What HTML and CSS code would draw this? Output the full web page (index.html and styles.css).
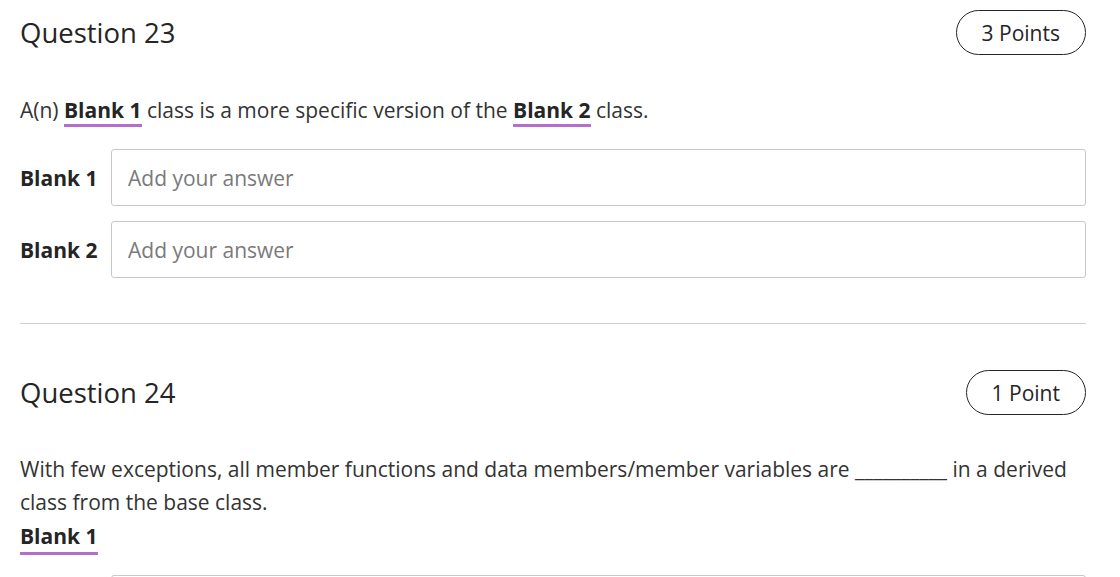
FILE: index.html
```html
<!DOCTYPE html>
<html lang="en">
<head>
<meta charset="UTF-8">
<title>Quiz</title>
<link rel="stylesheet" href="styles.css">
</head>
<body>
<div class="quiz">
  <div class="question">
    <div class="q-head">
      <h2>Question 23</h2>
      <span class="points">3 Points</span>
    </div>
    <p class="q-text">A(n) <span class="blank">Blank 1</span> class is a more specific version of the <span class="blank">Blank 2</span> class.</p>
    <div class="answer-row">
      <label>Blank 1</label>
      <input type="text" placeholder="Add your answer">
    </div>
    <div class="answer-row">
      <label>Blank 2</label>
      <input type="text" placeholder="Add your answer">
    </div>
  </div>

  <div class="question">
    <div class="q-head">
      <h2>Question 24</h2>
      <span class="points">1 Point</span>
    </div>
    <p class="q-text">With few exceptions, all member functions and data members/member variables are __________ in a derived class from the base class.</p>
    <div class="blank-title"><span class="blank">Blank 1</span></div>
    <div class="answer-row">
      <label></label>
      <input type="text" placeholder="Add your answer">
    </div>
  </div>
</div>
</body>
</html>
```

FILE: styles.css
```css
body {
  margin: 0;
  font-family: "Open Sans", Arial, sans-serif;
  color: #252525;
  background: #fff;
}
.quiz {
  padding: 0 34px 0 20px;
}
.question {
  border-bottom: 1px solid #cfcfcf;
  padding-bottom: 45px;
}
.question + .question {
  border-bottom: none;
}
.q-head {
  display: flex;
  justify-content: space-between;
  align-items: center;
  padding-top: 10px;
  height: 45px;
}
h2 {
  margin: 0;
  font-size: 27.5px;
  font-weight: 400;
  color: #252525;
}
.question + .question .q-head {
  padding-top: 46px;
}
.points {
  display: inline-flex;
  align-items: center;
  height: 43px;
  padding: 0 25px;
  border: 1px solid #252525;
  border-radius: 23px;
  font-size: 21px;
}
.q-text {
  margin: 39px 0 0;
  font-size: 21px;
  line-height: 33px;
  color: #333;
}
.question + .question .q-text {
  margin-top: 38px;
}
.blank {
  font-weight: 700;
  color: #252525;
  border-bottom: 3px solid #b46fce;
  padding-bottom: 0;
}
.answer-row {
  display: flex;
  align-items: center;
  margin-top: 15px;
}
.q-text + .answer-row {
  margin-top: 22px;
}
.answer-row label {
  width: 91px;
  font-size: 21px;
  font-weight: 700;
}
.answer-row input {
  flex: 1;
  height: 57px;
  box-sizing: border-box;
  border: 1px solid #c8c8c8;
  border-radius: 3px;
  padding: 0 16px;
  font-family: inherit;
  font-size: 21px;
  color: #252525;
}
.answer-row input::placeholder {
  color: #7a7a7a;
}
.blank-title {
  margin-top: 1px;
  font-size: 21px;
  line-height: 33px;
}
.blank-title .blank {
  padding-bottom: 2px;
}
.blank-title + .answer-row {
  margin-top: 22px;
}
```
